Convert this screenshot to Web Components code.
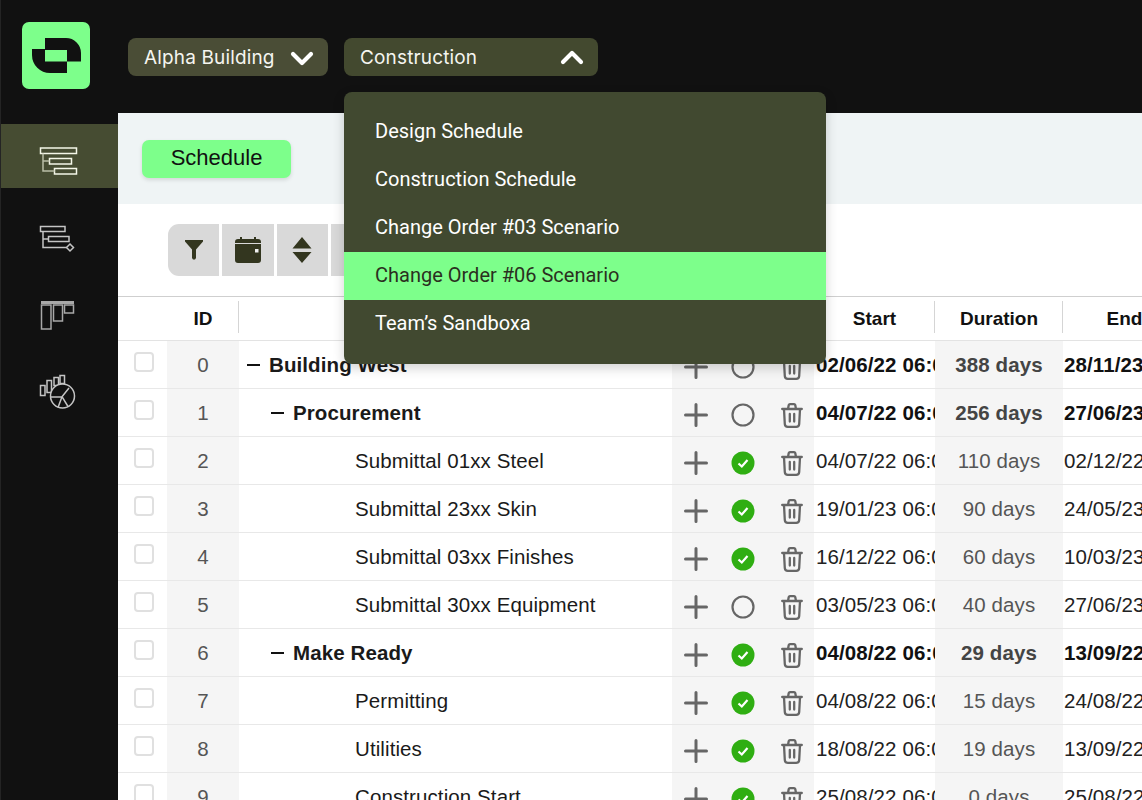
<!DOCTYPE html>
<html>
<head>
<meta charset="utf-8">
<title>Schedule</title>
<style>
    html, body { margin: 0; height: 800px; overflow: hidden; background: #111; }
</style>
</head>
<body>
<app-shell>
    <brand-logo slot="logo"></brand-logo>

    <nav-item slot="nav" active>
        <svg viewBox="1 0 117 64" fill="none" stroke="#f4f6e8" stroke-width="1.5">
            <rect x="40.5" y="24" width="36" height="5.5"/>
            <rect x="49.5" y="34.5" width="22" height="5.5"/>
            <rect x="54.5" y="44.5" width="22" height="5.5"/>
            <path d="M43 29.5V47H54.5M43 37H49.5" stroke="#b9bda6"/>
        </svg>
    </nav-item>
    <nav-item slot="nav">
        <svg viewBox="1 0 117 64" fill="none" stroke="#c4c4c4" stroke-width="1.5">
            <rect x="40.5" y="24.5" width="24.5" height="5"/>
            <rect x="48.5" y="34.5" width="20.5" height="5"/>
            <path d="M43 29.5V45.5H66.5M43 37H48.5"/>
            <path d="M70 42L73.5 45.5L70 49L66.5 45.5Z"/>
        </svg>
    </nav-item>
    <nav-item slot="nav">
        <svg viewBox="1 0 117 64" fill="none" stroke="#a8a8a8" stroke-width="1.5">
            <rect x="41" y="21" width="33" height="3" fill="#a8a8a8" stroke="none"/>
            <rect x="41.5" y="25" width="9.5" height="24"/>
            <rect x="53.5" y="25" width="9" height="16"/>
            <rect x="64.5" y="25" width="9" height="8"/>
        </svg>
    </nav-item>
    <nav-item slot="nav">
        <svg viewBox="1 0 117 64" fill="none" stroke="#c4c4c4" stroke-width="1.5">
            <rect x="40.5" y="27.5" width="4.5" height="10"/>
            <rect x="47" y="22.5" width="4.5" height="12"/>
            <rect x="54" y="19.5" width="4.5" height="8"/>
            <rect x="60" y="17.5" width="4.5" height="8"/>
            <circle cx="62.500" cy="38" r="12" fill="#111111"/>
            <path d="M50.5 39L62 38.700L69 30M62 38.700L68 48.500M62 38.700L58 49.500"/>
        </svg>
    </nav-item>

    <top-select slot="top" icon="down">Alpha Building</top-select>
    <div slot="top" style="position: relative">
        <top-select icon="up" wide>Construction</top-select>
        <drop-menu>
            <menu-item>Design Schedule</menu-item>
            <menu-item>Construction Schedule</menu-item>
            <menu-item>Change Order #03 Scenario</menu-item>
            <menu-item selected>Change Order #06 Scenario</menu-item>
            <menu-item>Team’s Sandboxa</menu-item>
        </drop-menu>
    </div>

    <tab-band slot="content"><tab-pill>Schedule</tab-pill></tab-band>
    <tool-bar slot="content"></tool-bar>

    <schedule-table slot="content">
        <schedule-row rid="0" level="0" group start="02/06/22 06:00" dur="388 days" end="28/11/23 06:00">Building West</schedule-row>
        <schedule-row rid="1" level="1" group start="04/07/22 06:00" dur="256 days" end="27/06/23 06:00">Procurement</schedule-row>
        <schedule-row rid="2" level="2" done start="04/07/22 06:00" dur="110 days" end="02/12/22 06:00">Submittal 01xx Steel</schedule-row>
        <schedule-row rid="3" level="2" done start="19/01/23 06:00" dur="90 days" end="24/05/23 06:00">Submittal 23xx Skin</schedule-row>
        <schedule-row rid="4" level="2" done start="16/12/22 06:00" dur="60 days" end="10/03/23 06:00">Submittal 03xx Finishes</schedule-row>
        <schedule-row rid="5" level="2" start="03/05/23 06:00" dur="40 days" end="27/06/23 06:00">Submittal 30xx Equipment</schedule-row>
        <schedule-row rid="6" level="1" group done start="04/08/22 06:00" dur="29 days" end="13/09/22 06:00">Make Ready</schedule-row>
        <schedule-row rid="7" level="2" done start="04/08/22 06:00" dur="15 days" end="24/08/22 06:00">Permitting</schedule-row>
        <schedule-row rid="8" level="2" done start="18/08/22 06:00" dur="19 days" end="13/09/22 06:00">Utilities</schedule-row>
        <schedule-row rid="9" level="2" done start="25/08/22 06:00" dur="0 days" end="25/08/22 06:00">Construction Start</schedule-row>
    </schedule-table>
</app-shell>

<script>
class AppShell extends HTMLElement {
    constructor() {
        super();
        this.shadow = this.attachShadow({mode: 'open'});
        this.shadow.innerHTML = `
        <style>
            :host {
                display: grid;
                grid-template-columns: 117px 1fr;
                grid-template-rows: 113px 687px;
                box-sizing: border-box;
                width: 1142px;
                height: 800px;
                overflow: hidden;
                border-left: 1px solid #242424;
                background: #111111;
            }
            .logo { padding: 22px 0 0 21px; }
            .top { display: flex; align-items: flex-start; gap: 16px; padding: 38px 0 0 10px; position: relative; z-index: 2; }
            .nav { display: flex; flex-direction: column; gap: 14px; padding-top: 11px; }
            .content { background: #ffffff; overflow: hidden; }
        </style>
        <div class="logo"><slot name="logo"></slot></div>
        <div class="top"><slot name="top"></slot></div>
        <div class="nav"><slot name="nav"></slot></div>
        <div class="content"><slot name="content"></slot></div>
        `;
    }
}

class BrandLogo extends HTMLElement {
    constructor() {
        super();
        this.shadow = this.attachShadow({mode: 'open'});
        this.shadow.innerHTML = `
        <style>
            :host { display: block; width: 68px; height: 67px; }
            svg { display: block; }
        </style>
        <svg width="68" height="67" viewBox="22 22 68 67">
            <rect x="22" y="22" width="68" height="67" rx="7" fill="#7dff8b"/>
            <path d="M45 38H66a15 15 0 0 1 15 15V61.500H67V73H50a18 18 0 0 1-18-18V49H45Z" fill="#111111"/>
            <rect x="45" y="50" width="22" height="11.500" fill="#7dff8b"/>
        </svg>
        `;
    }
}

class NavItem extends HTMLElement {
    constructor() {
        super();
        this.shadow = this.attachShadow({mode: 'open'});
        this.shadow.innerHTML = `
        <style>
            :host { display: block; height: 64px; }
            :host([active]) { background: #464c32; }
            ::slotted(svg) { display: block; width: 117px; height: 64px; }
        </style>
        <slot></slot>
        `;
    }
}

class TopSelect extends HTMLElement {
    constructor() {
        super();
        this.shadow = this.attachShadow({mode: 'open'});
        const path = this.getAttribute('icon') === 'up' ? 'M3 14L12 5L21 14' : 'M3 6L12 15L21 6';
        this.shadow.innerHTML = `
        <style>
            :host {
                display: flex;
                align-items: center;
                justify-content: space-between;
                box-sizing: border-box;
                width: 200px;
                height: 38px;
                padding: 0 14px 0 16px;
                border-radius: 8px;
                background: #4a4d36;
                color: #f5f5f0;
                font: 400 19px Inter, "Liberation Sans", sans-serif;
                letter-spacing: 0.15px;
            }
            :host([wide]) { width: 254px; background: #43492f; }
            svg { display: block; }
        </style>
        <slot></slot>
        <svg width="24" height="19" viewBox="0 0 24 19" fill="none" stroke="#ffffff" stroke-width="4.200" stroke-linecap="round" stroke-linejoin="round"><path d="${path}"/></svg>
        `;
    }
}

class DropMenu extends HTMLElement {
    constructor() {
        super();
        this.shadow = this.attachShadow({mode: 'open'});
        this.shadow.innerHTML = `
        <style>
            :host {
                position: absolute;
                left: 0;
                top: 54px;
                width: 482px;
                padding: 16px 0;
                border-radius: 8px;
                background: #414930;
                box-shadow: 0 4px 12px rgba(0, 0, 0, 0.18);
            }
        </style>
        <slot></slot>
        `;
    }
}

class MenuItem extends HTMLElement {
    constructor() {
        super();
        this.shadow = this.attachShadow({mode: 'open'});
        this.shadow.innerHTML = `
        <style>
            :host {
                display: flex;
                align-items: center;
                box-sizing: border-box;
                height: 48px;
                padding: 0 0 2px 31px;
                color: #ffffff;
                font: 400 20px Roboto, "Liberation Sans", sans-serif;
            }
            :host([selected]) { background: #7dff8b; color: #2b3020; }
        </style>
        <slot></slot>
        `;
    }
}

class TabBand extends HTMLElement {
    constructor() {
        super();
        this.shadow = this.attachShadow({mode: 'open'});
        this.shadow.innerHTML = `
        <style>
            :host { display: flex; box-sizing: border-box; height: 91px; padding: 27px 24px; background: #eff4f5; }
        </style>
        <slot></slot>
        `;
    }
}

class TabPill extends HTMLElement {
    constructor() {
        super();
        this.shadow = this.attachShadow({mode: 'open'});
        this.shadow.innerHTML = `
        <style>
            :host {
                display: flex;
                align-items: center;
                justify-content: center;
                box-sizing: border-box;
                width: 149px;
                height: 38px;
                padding-bottom: 2px;
                border-radius: 7px;
                background: #7dff8b;
                box-shadow: 0 2px 4px rgba(0, 0, 0, 0.12);
                color: #111111;
                font: 400 22px "Liberation Sans", Arial, sans-serif;
            }
        </style>
        <slot></slot>
        `;
    }
}

class ToolBar extends HTMLElement {
    constructor() {
        super();
        this.shadow = this.attachShadow({mode: 'open'});
        this.shadow.innerHTML = `
        <style>
            :host { display: flex; gap: 3px; box-sizing: border-box; height: 92px; padding: 20px 0 0 50px; }
            .btn { display: flex; align-items: center; justify-content: center; width: 51px; height: 52px; background: #d9d9d9; }
            .btn:first-of-type { border-radius: 11px 0 0 11px; }
            .btn:nth-of-type(2) { width: 52px; }
            .btn:nth-of-type(3) svg { margin-right: 1px; }
        </style>
        <div class="btn">
            <svg width="18" height="20" viewBox="0 0 18 20"><path d="M0 0H18V1.500L11 9.500V18L10 19.500H8L7 18V9.500L0 1.500Z" fill="#33361f"/></svg>
        </div>
        <div class="btn">
            <svg width="26" height="26" viewBox="0 0 26 26">
                <path d="M3 2H5V0H7V2H19V0H21V2H23A3 3 0 0 1 26 5V23A3 3 0 0 1 23 26H3A3 3 0 0 1 0 23V5A3 3 0 0 1 3 2Z" fill="#33361f"/>
                <rect x="0" y="6" width="26" height="1" fill="#d9d9d9"/>
                <rect x="20" y="12" width="3.500" height="3.500" fill="#f0f0f0"/>
            </svg>
        </div>
        <div class="btn">
            <svg width="20" height="26" viewBox="0 0 20 26"><path d="M10 0L19.500 11.500H.5ZM.5 15H19.500L10 26Z" fill="#33361f"/></svg>
        </div>
        <div class="btn"></div>
        `;
    }
}

class ScheduleTable extends HTMLElement {
    constructor() {
        super();
        this.shadow = this.attachShadow({mode: 'open'});
        this.shadow.innerHTML = `
        <style>
            :host { display: block; border-top: 1px solid #cfcfcf; font: 400 20px "Liberation Sans", Arial, sans-serif; }
            .head {
                display: grid;
                grid-template-columns: 49px 72px 433px 142px 121px 128px 122px;
                height: 43px;
                border-bottom: 1px solid #e3e3e3;
                color: #111111;
                font-weight: 700;
                font-size: 19px;
            }
            .head div { display: flex; align-items: center; justify-content: center; margin: 4px 0 7px; padding: 4px 0 0 1px; box-sizing: border-box; }
            .head .sep { border-right: 1px solid #d5d5d5; }
        </style>
        <div class="head">
            <div></div>
            <div class="sep">ID</div>
            <div></div>
            <div></div>
            <div class="sep">Start</div>
            <div class="sep">Duration</div>
            <div>End</div>
        </div>
        <slot></slot>
        `;
    }
}

class ScheduleRow extends HTMLElement {
    constructor() {
        super();
        this.shadow = this.attachShadow({mode: 'open'});
    }

    connectedCallback() {
        this.render();
    }

    render() {
        const level = Number(this.getAttribute('level'));
        const group = this.hasAttribute('group');
        const done = this.hasAttribute('done');
        const indent = [8, 32, 116][level];
        const status = done
            ? `<circle cx="12" cy="12" r="11.500" fill="#2fae12"/><path d="M7.500 12.500L10.800 15.500L16.500 9" fill="none" stroke="#fff" stroke-width="2.200"/>`
            : `<circle cx="12" cy="12" r="10.500" fill="none" stroke="#666" stroke-width="2.200"/>`;
        this.shadow.innerHTML = `
        <style>
            :host {
                display: grid;
                grid-template-columns: 49px 72px 433px 142px 121px 128px 122px;
                height: 48px;
                box-sizing: border-box;
                border-bottom: 1px solid #e8e8e8;
                color: #222222;
                font: 400 20.500px "Liberation Sans", Arial, sans-serif;
                letter-spacing: 0.1px;
                white-space: nowrap;
            }
            :host([group]) { font-weight: 700; color: #111111; }
            .check { padding: 11px 0 0 16px; }
            .box { width: 16px; height: 16px; border: 2px solid #e0e0e0; border-radius: 4px; }
            .id, .dur { display: flex; align-items: center; justify-content: center; box-sizing: border-box; padding-top: 1px; background: #f5f5f5; color: #555555; }
            .id { font-weight: 400; }
            :host([group]) .dur { color: #444444; }
            .name { display: flex; align-items: center; box-sizing: border-box; padding: 1px 0 0 ${indent}px; color: #1a1a1a; }
            .toggle { width: 13px; height: 2.500px; margin-right: 9px; background: #111111; }
            .actions { display: grid; grid-template-columns: 47px 48px 49px; background: #f5f5f5; padding-top: 5px; box-sizing: border-box; }
            .actions span { display: flex; align-items: center; justify-content: center; }
            .actions svg { display: block; }
            .date { display: flex; align-items: center; box-sizing: border-box; padding: 1px 0 0 2px; overflow: hidden; color: #222222; }
            .date:last-of-type { padding-left: 1px; }
            :host([group]) .date { color: #111111; }
        </style>
        <div class="check"><div class="box"></div></div>
        <div class="id">${this.getAttribute('rid')}</div>
        <div class="name">${group ? '<span class="toggle"></span>' : ''}<slot></slot></div>
        <div class="actions">
            <span><svg width="24" height="24" viewBox="0 0 24 24" stroke="#666" stroke-width="3" stroke-linecap="round"><path d="M12 1.500V22.500M1.500 12H22.500"/></svg></span>
            <span><svg width="24" height="24" viewBox="0 0 24 24">${status}</svg></span>
            <span><svg width="22" height="25" viewBox="0 0 22 25" fill="none" stroke="#666" stroke-width="2.300" stroke-linecap="round" stroke-linejoin="round"><path d="M1.200 6H20.800M7 6L7.700 2.200A1.500 1.500 0 0 1 9 1.200H13A1.500 1.500 0 0 1 14.300 2.200L15 6M3 6L3.800 21A3 3 0 0 0 6.800 23.800H15.200A3 3 0 0 0 18.200 21L19 6M8.800 11V18.500M13.200 11V18.500"/></svg></span>
        </div>
        <div class="date">${this.getAttribute('start')}</div>
        <div class="dur">${this.getAttribute('dur')}</div>
        <div class="date">${this.getAttribute('end')}</div>
        `;
    }
}

customElements.define('app-shell', AppShell);
customElements.define('brand-logo', BrandLogo);
customElements.define('nav-item', NavItem);
customElements.define('top-select', TopSelect);
customElements.define('drop-menu', DropMenu);
customElements.define('menu-item', MenuItem);
customElements.define('tab-band', TabBand);
customElements.define('tab-pill', TabPill);
customElements.define('tool-bar', ToolBar);
customElements.define('schedule-table', ScheduleTable);
customElements.define('schedule-row', ScheduleRow);
</script>
</body>
</html>
